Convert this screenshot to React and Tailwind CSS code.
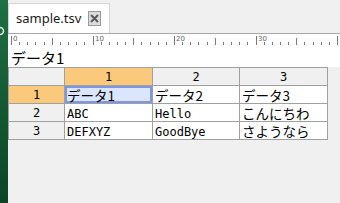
import React from "react";

const rows = [
  {
    n: "1",
    cells: [
      { t: "データ1", jp: true, sel: true },
      { t: "データ2", jp: true },
      { t: "データ3", jp: true },
    ],
  },
  {
    n: "2",
    cells: [{ t: "ABC" }, { t: "Hello" }, { t: "こんにちわ", jp: true }],
  },
  {
    n: "3",
    cells: [{ t: "DEFXYZ" }, { t: "GoodBye" }, { t: "さようなら", jp: true }],
  },
];

function Ruler() {
  const ticks = [];
  for (let n = 0; n <= 40; n++) {
    const x = Math.round(3 + n * 8.15) + 0.5;
    const y1 = n % 10 === 0 ? 2 : n % 5 === 0 ? 4 : 8;
    ticks.push(
      <line key={n} x1={x} x2={x} y1={y1} y2={11} stroke="#7a7a7a" strokeWidth="1" />
    );
    if (n % 10 === 0 && n < 40)
      ticks.push(
        <text key={"t" + n} x={x + 1.5} y={6.5} fontSize="7" fill="#666" fontFamily="DejaVu Sans, sans-serif">
          {n}
        </text>
      );
  }
  return (
    <svg width="332" height="12" className="block">
      {ticks}
    </svg>
  );
}

export default function App() {
  return (
    <div className="flex w-[340px] h-[203px] overflow-hidden bg-[#f0f0f0]">
      {/* green side strip */}
      <div className="w-[8px] h-full bg-gradient-to-b from-[#1f7044] to-[#0b4526] shrink-0">
        <svg width="8" height="60" className="block">
          <circle cx="0" cy="31" r="3.5" stroke="#e8f0ea" strokeWidth="1.5" fill="none" />
        </svg>
      </div>

      <div className="flex flex-col flex-1">
        {/* tab bar */}
        <div className="h-[33px] flex items-end">
          <div className="h-[30px] w-[102px] bg-white border-l border-t border-r border-[#d6d6d6] flex items-center pl-[7px] pr-[8px] gap-[7px]">
            <span className="font-['Noto_Sans',sans-serif] text-[13px] leading-none text-[#1a1a1a] pb-[1px]">
              sample.tsv
            </span>
            <div className="w-[15px] h-[15px] border border-[#9a9a9a] bg-[#dcdcdc] flex items-center justify-center">
              <svg width="9" height="9" viewBox="0 0 9 9">
                <path d="M1 1L8 8M8 1L1 8" stroke="#5a5a5a" strokeWidth="2" />
              </svg>
            </div>
          </div>
        </div>

        {/* ruler */}
        <div className="bg-white border-t border-[#a8a8a8]">
          <Ruler />
        </div>

        {/* edit line */}
        <div className="h-[21px] bg-white flex items-center pl-[3px] pt-[1px]">
          <span className="font-['Noto_Sans_CJK_JP',sans-serif] text-[15px] leading-none text-black">
            データ1
          </span>
        </div>

        {/* grid */}
        <div className="grid grid-cols-[56px_88px_87px_88px] w-fit border-l border-t border-[#a0a0a0] font-['DejaVu_Sans_Mono',monospace] text-[12px] leading-none text-black">
          <div className="h-[18px] border-r border-b border-[#a0a0a0] bg-[#f0f0f0]" />
          {["1", "2", "3"].map((c) => (
            <div
              key={c}
              className={
                "h-[18px] border-r border-b border-[#a0a0a0] flex items-center justify-center pt-[1px] text-[12px] " +
                (c === "1" ? "bg-[#fbc97c]" : "bg-[#f0f0f0]")
              }
            >
              {c}
            </div>
          ))}
          {rows.map((r) => (
            <React.Fragment key={r.n}>
              <div
                className={
                  "h-[18px] border-r border-b border-[#a0a0a0] flex items-center justify-center pt-[1px] text-[12px] " +
                  (r.n === "1" ? "bg-[#fbc97c]" : "bg-[#f0f0f0]")
                }
              >
                {r.n}
              </div>
              {r.cells.map((c, i) => (
                <div
                  key={i}
                  className={
                    "h-[18px] border-r border-b border-[#a0a0a0] flex items-center pl-[2px] pt-[2px] whitespace-nowrap overflow-hidden " +
                    (c.sel ? "bg-[#dbe5fb] shadow-[inset_0_0_0_2px_#7d97e3] " : "bg-white ") +
                    (c.jp ? "font-['Noto_Sans_CJK_JP',sans-serif] text-[13.5px]" : "")
                  }
                >
                  {c.t}
                </div>
              ))}
            </React.Fragment>
          ))}
        </div>
      </div>
    </div>
  );
}
